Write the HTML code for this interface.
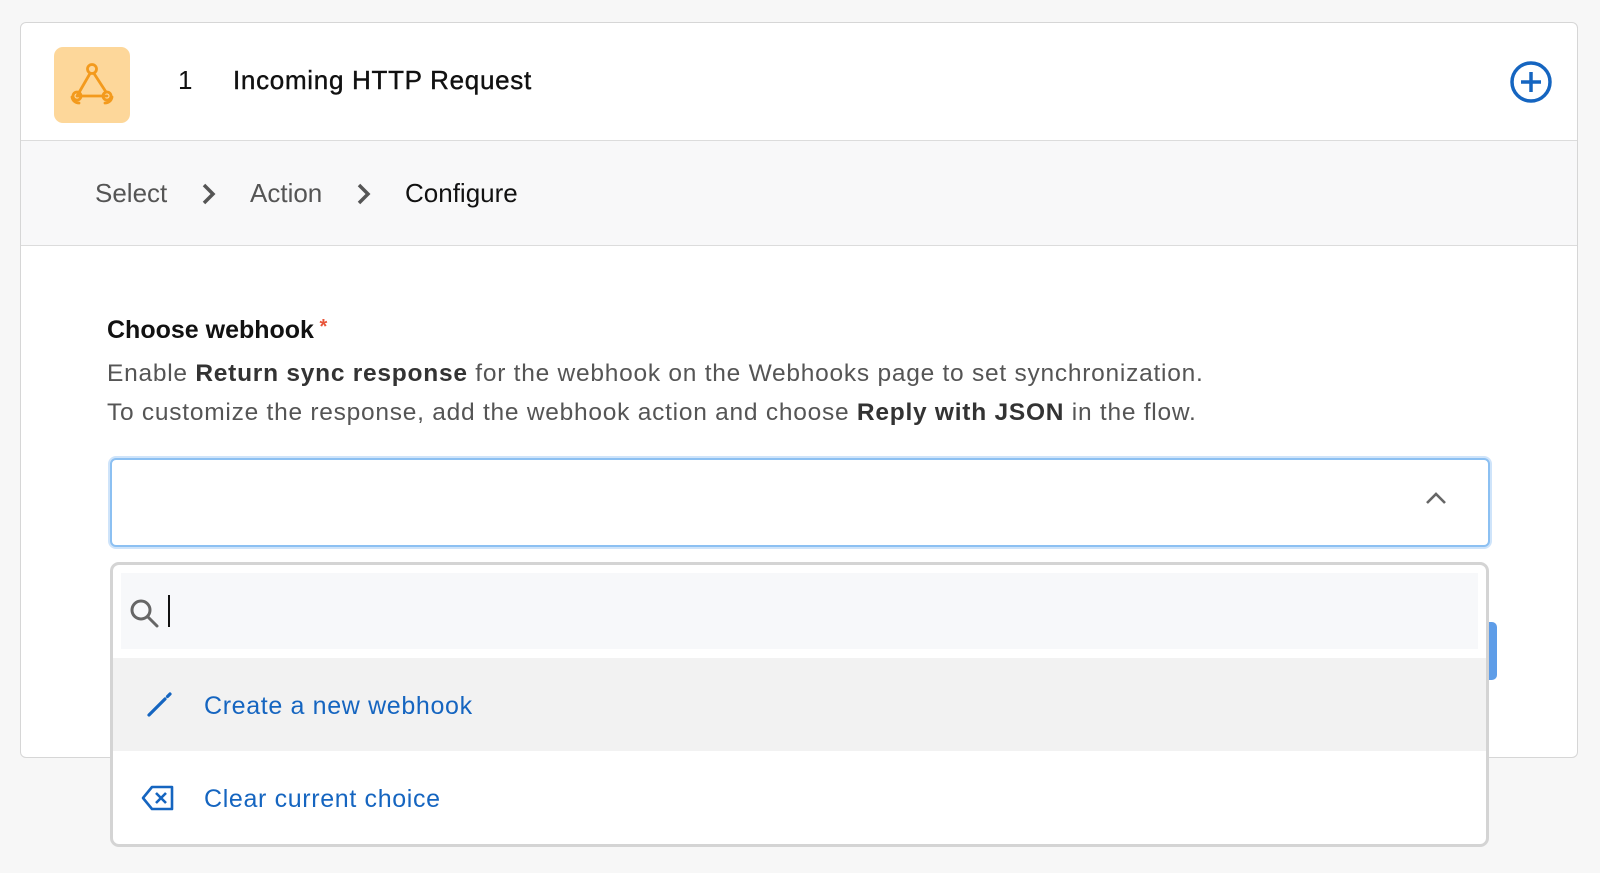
<!DOCTYPE html>
<html><head><style>
*{box-sizing:border-box;margin:0;padding:0}
body{width:1600px;height:873px;background:#f7f7f7;font-family:"Liberation Sans",sans-serif;position:relative;overflow:hidden}
.card{position:absolute;left:20px;top:22px;width:1558px;height:736px;background:#fff;border:1.5px solid #d6d6d6;border-radius:6px;overflow:hidden}
.hdr{position:absolute;left:0;top:0;right:0;height:118px;border-bottom:1.5px solid #dcdcdc}
.ico{position:absolute;left:33px;top:24px;width:76px;height:76px;background:#fdd79a;border-radius:9px}
.bc{position:absolute;left:0;right:0;top:118px;height:105px;background:#f8f8f9;border-bottom:1.5px solid #dcdcdc}
.t{position:absolute;white-space:nowrap}
.btn{position:absolute;left:1466px;top:599px;width:10px;height:58px;background:#5e9de8;border-radius:0 5px 5px 0}
.sel{position:absolute;left:110px;top:458px;width:1380px;height:89px;border:2px solid #8cc0f2;box-shadow:0 0 0 2px #cfe4fa;border-radius:6px;background:#fff}
.dd{position:absolute;left:110px;top:562px;width:1379px;height:285px;border:3px solid #d4d4d4;border-radius:9px;background:#fff;overflow:hidden}
.srch{position:absolute;left:8px;top:8px;right:8px;height:76px;background:#f7f8fa}
.row1{position:absolute;left:0;right:0;top:93px;height:93px;background:#f2f2f2}
.blue{color:#1565c0;font-size:25px;letter-spacing:0.65px}
.desc{font-size:24.5px;color:#555;letter-spacing:0.75px}
</style></head><body>
<div class="card">
 <div class="hdr">
  <div class="ico"><svg width="76" height="76" viewBox="0 0 76 76" fill="none" stroke="#f39a1d" stroke-width="2.8" stroke-linecap="round"><circle cx="38" cy="22" r="4.5"/><circle cx="23" cy="49" r="4"/><circle cx="53" cy="49" r="4"/><path d="M36 26.5 L23 49 M40 26.5 L52 45 M23 49 H53"/><path d="M18 50 A7 7 0 0 0 25 56 M58 50 A7 7 0 0 1 51 56"/></svg></div>
  <div class="t" style="left:157px;top:42px;font-size:26px;color:#111">1</div>
  <div class="t" style="left:212px;top:42px;font-size:26px;color:#111;letter-spacing:0.7px;-webkit-text-stroke:0.4px #111">Incoming HTTP Request</div>
  <svg class="t" style="left:1488px;top:37px" width="44" height="44" viewBox="0 0 44 44" fill="none" stroke="#1565c0" stroke-width="3.5"><circle cx="22" cy="22" r="19"/><path d="M22 12V32M12 22H32"/></svg>
 </div>
 <div class="bc">
  <div class="t" style="left:74px;top:37px;font-size:26px;color:#555">Select</div>
  <svg class="t" style="left:178px;top:40px" width="20" height="26" viewBox="0 0 20 26" fill="none" stroke="#555" stroke-width="3.5"><path d="M5 4L14 13L5 22"/></svg>
  <div class="t" style="left:229px;top:37px;font-size:26px;color:#555">Action</div>
  <svg class="t" style="left:333px;top:40px" width="20" height="26" viewBox="0 0 20 26" fill="none" stroke="#555" stroke-width="3.5"><path d="M5 4L14 13L5 22"/></svg>
  <div class="t" style="left:384px;top:37px;font-size:26px;color:#111">Configure</div>
 </div>
 <div class="t" style="left:86px;top:293px;font-size:25px;color:#111;font-weight:600">Choose webhook<span style="color:#e8553a;font-size:20px;vertical-align:top"> *</span></div>
 <div class="t desc" style="left:86px;top:337px">Enable <b style="color:#333">Return sync response</b> for the webhook on the Webhooks page to set synchronization.</div>
 <div class="t desc" style="left:86px;top:376px">To customize the response, add the webhook action and choose <b style="color:#333">Reply with JSON</b> in the flow.</div>
 <div class="btn"></div>
</div>
<div class="sel"><svg class="t" style="left:1312px;top:30px" width="24" height="16" viewBox="0 0 24 16" fill="none" stroke="#666" stroke-width="2.6"><path d="M3 13L12 4L21 13"/></svg></div>
<div class="dd">
 <div class="srch">
  <svg class="t" style="left:8px;top:25px" width="32" height="32" viewBox="0 0 32 32" fill="none" stroke="#666" stroke-width="3"><circle cx="12" cy="12" r="9"/><path d="M19 19L28 28" stroke-linecap="round"/></svg>
  <div class="t" style="left:47px;top:22px;width:2px;height:32px;background:#111"></div>
 </div>
 <div class="row1"></div>
 <svg class="t" style="left:33px;top:125px" width="28" height="28" viewBox="0 0 28 28" fill="none" stroke="#1565c0" stroke-width="3.2" stroke-linecap="round"><path d="M3 25L19 9M21.5 6.5L24 4"/></svg>
 <div class="t blue" style="left:91px;top:127px">Create a new webhook</div>
 <svg class="t" style="left:28px;top:219px" width="34" height="28" viewBox="0 0 34 28" fill="none" stroke="#1565c0" stroke-width="2.6" stroke-linejoin="round"><path d="M11 3H31V25H11L2 14Z"/><path d="M15 9L25 19M25 9L15 19"/></svg>
 <div class="t blue" style="left:91px;top:220px">Clear current choice</div>
</div>
</body></html>
